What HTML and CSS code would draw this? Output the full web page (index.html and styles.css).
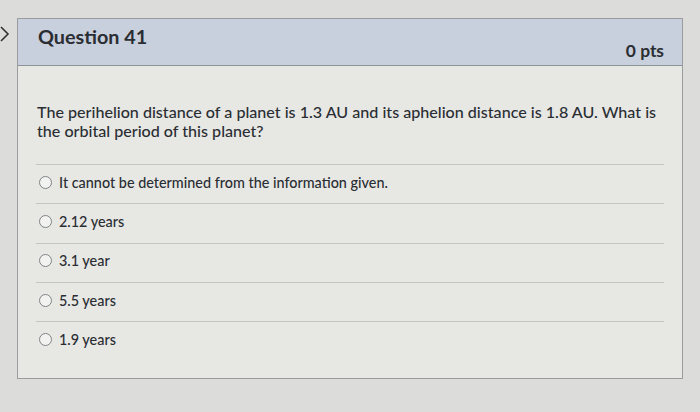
FILE: index.html
```html
<!DOCTYPE html>
<html>
<head>
<meta charset="utf-8">
<link rel="stylesheet" href="styles.css">
</head>
<body>
<div class="page">
  <svg class="chev" width="10" height="16" viewBox="0 0 10 16"><path d="M1 1 L8 8 L1 15" fill="none" stroke="#333" stroke-width="1.6"/></svg>
  <div class="card">
    <div class="header">
      <div class="title">Question 41</div>
      <div class="pts">0 pts</div>
    </div>
    <div class="content">
      <p class="qtext">The perihelion distance of a planet is 1.3 AU and its aphelion distance is 1.8 AU. What is the orbital period of this planet?</p>
      <div class="answers">
        <div class="answer"><span class="radio"></span><span class="label">It cannot be determined from the information given.</span></div>
        <div class="answer"><span class="radio"></span><span class="label">2.12 years</span></div>
        <div class="answer"><span class="radio"></span><span class="label">3.1 year</span></div>
        <div class="answer"><span class="radio"></span><span class="label">5.5 years</span></div>
        <div class="answer"><span class="radio"></span><span class="label">1.9 years</span></div>
      </div>
    </div>
  </div>
</div>
</body>
</html>
```

FILE: styles.css
```css
html, body {
  margin: 0;
  padding: 0;
  background: #dcdcda;
  width: 700px;
  height: 412px;
  overflow: hidden;
  font-family: Lato, "Open Sans", sans-serif;
  color: #2a2e33;
}
.page {
  display: flex;
  align-items: flex-start;
  padding-top: 18px;
}
.chev {
  margin-top: 8px;
  margin-right: 7px;
  flex: none;
}
.card {
  width: 666px;
  height: 361px;
  border: 1px solid #9a9c9e;
  background: #e7e7e4;
  box-sizing: border-box;
}
.header {
  height: 47px;
  background: #c8cfdd;
  border-bottom: 1px solid #8e939a;
  display: flex;
  justify-content: space-between;
  align-items: flex-start;
  padding: 0 18px 0 20px;
  box-sizing: border-box;
}
.title {
  font-size: 19.8px;
  font-weight: 700;
  margin-top: 5px;
}
.pts {
  font-size: 17.4px;
  font-weight: 700;
  margin-top: 21px;
}
.content {
  padding: 36px 18px 0 18px;
}
.qtext {
  margin: 0 0 0 1px;
  font-size: 16.1px;
  line-height: 19px;
  font-weight: 500;
  width: 628px;
}
.answers {
  margin-top: 24px;
  border-top: 1px solid #c4c5c4;
}
.answer {
  height: 39.3px;
  border-bottom: 1px solid #c4c5c4;
  display: flex;
  align-items: center;
  padding-left: 3px;
  padding-bottom: 4px;
  box-sizing: border-box;
}
.answer:last-child {
  border-bottom: none;
}
.radio {
  width: 11px;
  height: 11px;
  border: 1.5px solid #7f8488;
  border-radius: 50%;
  background: #f2f2f0;
  margin-right: 7px;
  flex: none;
}
.label {
  font-size: 14.4px;
  font-weight: 500;
}
```
